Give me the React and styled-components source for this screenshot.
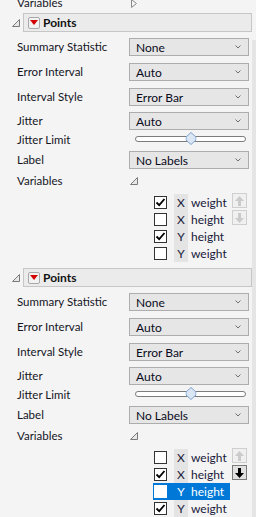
import React from "react";
import styled, { createGlobalStyle } from "styled-components";

const GlobalStyle = createGlobalStyle`
  html, body {
    margin: 0;
    padding: 0;
    background: #f4f4f4;
  }
  body {
    font-family: Lato, "Liberation Sans", sans-serif;
    font-size: 12px;
    color: #15151f;
  }
`;

const Page = styled.div`
  width: 256px;
  height: 517px;
  overflow: hidden;
  display: flex;
  background: #f4f4f4;
`;

const Content = styled.div`
  width: 252px;
  display: flex;
  flex-direction: column;
`;

const Scrollbar = styled.div`
  width: 4px;
  display: flex;
  flex-direction: column;
  padding-top: 40px;
`;

const ScrollTrack = styled.div`
  flex: 1;
  background: #e5e5e5;
`;

const Row = styled.div`
  display: grid;
  grid-template-columns: 112px 120px;
  padding-left: 17px;
  height: ${(p) => p.$h}px;
  align-items: ${(p) => (p.$top ? "start" : "center")};
  margin-top: ${(p) => p.$mt || 0}px;
  margin-bottom: ${(p) => p.$mb || 0}px;
`;

const Label = styled.div`
  font-size: 11.5px;
  line-height: ${(p) => p.$lh || 18}px;
  white-space: nowrap;
`;

const Section = styled.div`
  margin-bottom: 6px;
`;

const HeaderRow = styled.div`
  display: flex;
  align-items: center;
  padding-left: 12px;
  gap: 3px;
  height: 19px;
  margin-bottom: 6px;
`;

const HeaderBar = styled.div`
  flex: 1;
  height: 19px;
  box-sizing: border-box;
  border: 1px solid #c6c6c6;
  background: #ebebeb;
  display: flex;
  align-items: center;
  padding-left: 4px;
  gap: 3px;
  font-weight: 700;
  color: #111;
`;

const RedButton = styled.div`
  width: 12px;
  height: 12px;
  box-sizing: border-box;
  border: 1px solid #a8a8a8;
  border-radius: 2px;
  background: #f2f2f2;
  display: flex;
  align-items: center;
  justify-content: center;
`;

const Select = styled.div`
  height: 18px;
  box-sizing: border-box;
  border: 1px solid #adadad;
  background: #e6e6e6;
  display: flex;
  align-items: center;
  justify-content: space-between;
  padding: 0 7px 0 6px;
  color: #0a0a1c;
`;

const SliderWrap = styled.div`
  position: relative;
  height: 13px;
  margin-left: 6px;
  width: 111px;
  display: flex;
  align-items: center;
`;

const Track = styled.div`
  width: 100%;
  height: 6px;
  box-sizing: border-box;
  border: 1px solid #7c7c7c;
  border-radius: 3px;
  background: #fff;
`;

const Thumb = styled.svg`
  position: absolute;
  top: 0;
  left: ${(p) => p.$pos}%;
  transform: translateX(-50%);
`;

const ListArea = styled.div`
  display: flex;
  padding-left: 153px;
  gap: 2px;
  margin-top: 4px;
`;

const List = styled.div`
  width: 77px;
  display: flex;
  flex-direction: column;
`;

const Item = styled.div`
  height: 17px;
  display: flex;
  align-items: center;
  padding-left: 1px;
  background: ${(p) => (p.$selected ? "#0078d7" : "transparent")};
  color: ${(p) => (p.$selected ? "#fff" : "#19193a")};
`;

const Box = styled.div`
  width: 13px;
  height: 13px;
  box-sizing: border-box;
  border: 1px solid ${(p) => (p.$selected ? "#fff" : "#333")};
  background: #fff;
  display: flex;
  align-items: center;
  justify-content: center;
`;

const Role = styled.div`
  width: 14px;
  height: 17px;
  margin-left: 7px;
  background: ${(p) => (p.$selected ? "transparent" : "#e4e4e4")};
  display: flex;
  align-items: center;
  justify-content: center;
`;

const Name = styled.div`
  margin-left: 3px;
`;

const Buttons = styled.div`
  display: flex;
  flex-direction: column;
  gap: 2px;
  margin-top: -1px;
`;

const MoveButton = styled.div`
  width: 15px;
  height: 15px;
  box-sizing: border-box;
  border: 1px solid ${(p) => (p.$on ? "#7a7a7a" : "#cfcfcf")};
  background: ${(p) => (p.$on ? "#e1e1e1" : "#f0f0f0")};
  display: flex;
  align-items: center;
  justify-content: center;
`;

const IconCell = styled.div`
  display: flex;
  padding-left: ${(p) => p.$pl}px;
`;

const Disclosure = ({ open }) =>
  open ? (
    <svg width="8" height="8" viewBox="0 0 8 8">
      <polygon points="7.5,0.5 7.5,7.5 0.5,7.5" fill="#e8e8e8" stroke="#7a7a7a" />
    </svg>
  ) : (
    <svg width="6" height="9" viewBox="0 0 6 9">
      <polygon points="0.5,0.5 5.5,4.5 0.5,8.5" fill="#f4f4f4" stroke="#8a8a8a" />
    </svg>
  );

const Chevron = () => (
  <svg width="6" height="4" viewBox="0 0 6 4">
    <polyline points="0.5,0.5 3,3 5.5,0.5" fill="none" stroke="#6f6f6f" strokeWidth="1" />
  </svg>
);

const Check = () => (
  <svg width="11" height="11" viewBox="0 0 11 11">
    <polyline points="1.5,5.5 4.2,8.2 9.5,2" fill="none" stroke="#000" strokeWidth="1.8" />
  </svg>
);

const Arrow = ({ dir, on }) => (
  <svg width="9" height="10" viewBox="0 0 9 10">
    <polygon
      points="3,0 6,0 6,5 9,5 4.5,10 0,5 3,5"
      fill={on ? "#000" : "#cbcbcb"}
      transform={dir === "up" ? "rotate(180 4.5 5)" : undefined}
    />
  </svg>
);

const DropRow = ({ label, value, h }) => (
  <Row $h={h} $top>
    <Label>{label}</Label>
    <Select>
      <span>{value}</span>
      <Chevron />
    </Select>
  </Row>
);

const PointsSection = ({ items, downOn }) => (
  <Section>
    <HeaderRow>
      <Disclosure open />
      <HeaderBar>
        <RedButton>
          <svg width="8" height="5" viewBox="0 0 8 5">
            <polygon points="0,0 8,0 4,5" fill="#d40000" />
          </svg>
        </RedButton>
        Points
      </HeaderBar>
    </HeaderRow>
    <DropRow label="Summary Statistic" value="None" h={25} />
    <DropRow label="Error Interval" value="Auto" h={25} />
    <DropRow label="Interval Style" value="Error Bar" h={24} />
    <DropRow label="Jitter" value="Auto" h={20} />
    <Row $h={19} $top>
      <Label $lh={15}>Jitter Limit</Label>
      <SliderWrap>
        <Track />
        <Thumb $pos={50} width="11" height="13" viewBox="0 0 11 13">
          <polygon
            points="5.5,0.5 10.5,5 10.5,8 5.5,12.5 0.5,8 0.5,5"
            fill="#dae6f4"
            stroke="#7fa3cf"
          />
        </Thumb>
      </SliderWrap>
    </Row>
    <DropRow label="Label" value="No Labels" h={21} />
    <Row $h={18}>
      <Label>Variables</Label>
      <IconCell $pl={1}>
        <Disclosure open />
      </IconCell>
    </Row>
    <ListArea>
      <List>
        {items.map((it, i) => (
          <Item key={i} $selected={it.selected}>
            <Box $selected={it.selected}>{it.checked && <Check />}</Box>
            <Role $selected={it.selected}>{it.role}</Role>
            <Name>{it.name}</Name>
          </Item>
        ))}
      </List>
      <Buttons>
        <MoveButton>
          <Arrow dir="up" />
        </MoveButton>
        <MoveButton $on={downOn}>
          <Arrow dir="down" on={downOn} />
        </MoveButton>
      </Buttons>
    </ListArea>
  </Section>
);

const first = [
  { checked: true, role: "X", name: "weight" },
  { checked: false, role: "X", name: "height" },
  { checked: true, role: "Y", name: "height" },
  { checked: false, role: "Y", name: "weight" },
];

const second = [
  { checked: false, role: "X", name: "weight" },
  { checked: true, role: "X", name: "height" },
  { checked: false, role: "Y", name: "height", selected: true },
  { checked: true, role: "Y", name: "weight" },
];

export default function App() {
  return (
    <>
      <GlobalStyle />
      <Page>
        <Content>
          <Row $h={18} $mt={-6} $mb={1}>
            <Label>Variables</Label>
            <IconCell $pl={2}>
              <Disclosure />
            </IconCell>
          </Row>
          <PointsSection items={first} />
          <PointsSection items={second} downOn />
        </Content>
        <Scrollbar>
          <ScrollTrack />
        </Scrollbar>
      </Page>
    </>
  );
}
